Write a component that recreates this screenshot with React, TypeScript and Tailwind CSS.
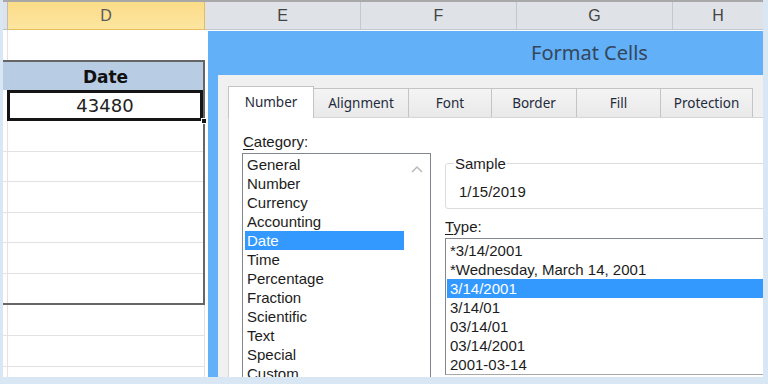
import React from "react";

const columns = [
  { name: "E", w: "w-[156px]" },
  { name: "F", w: "w-[156px]" },
  { name: "G", w: "w-[156px]" },
];

const categories = [
  "General",
  "Number",
  "Currency",
  "Accounting",
  "Date",
  "Time",
  "Percentage",
  "Fraction",
  "Scientific",
  "Text",
  "Special",
  "Custom",
];

const types = [
  "*3/14/2001",
  "*Wednesday, March 14, 2001",
  "3/14/2001",
  "3/14/01",
  "03/14/01",
  "03/14/2001",
  "2001-03-14",
];

const tabs = [
  { label: "Number", w: "w-[86px]" },
  { label: "Alignment", w: "w-[96px]" },
  { label: "Font", w: "w-[84px]" },
  { label: "Border", w: "w-[86px]" },
  { label: "Fill", w: "w-[85px]" },
  { label: "Protection", w: "w-[93px]" },
];

// plain sheet row: stub of column C + column D
const SheetRow = ({ h, last }: { h: string; last?: boolean }) => (
  <div className={`flex ${h} ${last ? "" : "border-b border-[#e2e2e2]"}`}>
    <div className="w-[5px] border-r border-[#e2e2e2]" />
    <div className="flex-1" />
  </div>
);

const FormatCells = () => (
  <div className="absolute left-[205px] top-[31px] w-[555px] h-[346px] overflow-hidden bg-[#62b0f8] flex flex-col">
    {/* Title bar */}
    <div className="h-[44px] shrink-0 flex items-center pl-[323px] text-[20px] text-[#34465a] font-['Noto_Sans',sans-serif]">
      Format Cells
    </div>

    <div className="flex-1 ml-[10px] bg-[#f0f0f0] pt-[11px] pl-[10px] flex flex-col">
      {/* Tabs */}
      <div className="flex items-end h-[31px] font-['Noto_Sans',sans-serif] text-[13.5px] text-[#1f2b3c]">
        {tabs.map((t, i) =>
          i === 0 ? (
            <div
              key={t.label}
              className={`${t.w} h-[32px] -mb-px relative z-10 bg-white border border-b-0 border-[#c4c4c4] flex items-center justify-center`}
            >
              {t.label}
            </div>
          ) : (
            <div
              key={t.label}
              className={`${t.w} h-[29px] -ml-px bg-gradient-to-b from-[#f4f4f4] to-[#e9e9e9] border border-b-0 border-[#c4c4c4] flex items-center justify-center`}
            >
              {t.label}
            </div>
          )
        )}
      </div>

      {/* Panel */}
      <div className="flex-1 bg-white border-t border-l border-[#d6d6d6] flex items-start pl-[13px] font-['Liberation_Sans',Arial,sans-serif] text-[15px] text-[#1c1c1c]">
        {/* Category column */}
        <div className="w-[189px] shrink-0 mt-[14px]">
          <div className="h-[19px] leading-[19px] pl-px">
            <span className="underline underline-offset-2">C</span>ategory:
          </div>
          <div className="mt-[2px] h-[240px] border border-[#828790] flex">
            <div className="flex-1 pt-[1px] pl-[2px]">
              {categories.map((c) => (
                <div
                  key={c}
                  className={`h-[19px] leading-[19px] pl-[2px] ${
                    c === "Date" ? "bg-[#3399ff] text-white" : ""
                  }`}
                >
                  {c}
                </div>
              ))}
            </div>
            <div className="w-[26px] flex justify-center pt-[11px]">
              <svg width="12" height="8" viewBox="0 0 12 8">
                <polyline
                  points="1,7 6,2 11,7"
                  fill="none"
                  stroke="#b9b9b9"
                  strokeWidth="1.5"
                />
              </svg>
            </div>
          </div>
        </div>

        {/* Sample + Type column */}
        <div className="ml-[14px] w-[400px] shrink-0 mt-[36px]">
          <fieldset className="h-[55px] border border-[#dcdcdc] rounded-[3px]">
            <legend className="ml-[8px] px-[1px] leading-[19px]">Sample</legend>
            <div className="pt-[9px] pl-[13px] leading-[19px]">1/15/2019</div>
          </fieldset>
          <div className="mt-[8px] h-[19px] leading-[19px]">
            <span className="underline underline-offset-2">T</span>ype:
          </div>
          <div className="mt-[2px] h-[137px] border border-[#828790] border-b-[#a8a8a8] pt-[2px] px-px">
            {types.map((t, i) => (
              <div
                key={t}
                className={`h-[19px] leading-[19px] pl-[3px] ${
                  i === 2 ? "bg-[#3399ff] text-white" : ""
                }`}
              >
                {t}
              </div>
            ))}
          </div>
        </div>
      </div>
    </div>
  </div>
);

export default function App() {
  return (
    <div className="w-[768px] h-[384px] bg-[#d9e6f4] overflow-hidden">
      <div className="relative ml-[3px] w-[760px] h-[377px] bg-white overflow-hidden">
        {/* Column headers */}
        <div className="flex h-[30px] border-t-2 border-[#a8a8a8] font-['Liberation_Sans',Arial,sans-serif] text-[16px]">
          <div className="w-[5px] bg-[#dfe3e8] border-r border-b border-[#b9bec6]" />
          <div className="w-[197px] bg-gradient-to-b from-[#fbdc88] to-[#fde6a0] border-r border-b border-[#e6bd5c] flex items-center justify-center text-[#5a5a5a]">
            D
          </div>
          {columns.map((c) => (
            <div
              key={c.name}
              className={`${c.w} bg-[#dfe3e8] border-r border-b border-[#c3c8cf] flex items-center justify-center text-[#444]`}
            >
              {c.name}
            </div>
          ))}
          <div className="flex-1 bg-[#dfe3e8] border-b border-[#c3c8cf] flex items-center justify-center text-[#444]">
            H
          </div>
        </div>

        {/* Sheet body: columns C (stub) and D */}
        <div className="w-[202px] font-['DejaVu_Sans',sans-serif]">
          <SheetRow h="h-[30px]" last />
          <div className="border-t-2 border-b-2 border-r-2 border-[#666]">
            <div className="h-[28px] bg-[#b8cce4] flex items-center justify-center pl-[5px] pt-[4px] font-bold text-[17px] text-[#111]">
              Date
            </div>
            <div className="relative flex h-[31px]">
              <div className="w-[4px]" />
              <div className="flex-1 border-[3px] border-[#151515] flex items-center justify-center text-[18px] text-[#222]">
                43480
              </div>
              <div className="absolute -right-[4px] -bottom-[3px] w-[6px] h-[6px] bg-[#151515] border border-white" />
            </div>
            <SheetRow h="h-[31px]" />
            <SheetRow h="h-[30px]" />
            <SheetRow h="h-[31px]" />
            <SheetRow h="h-[30px]" />
            <SheetRow h="h-[31px]" />
            <SheetRow h="h-[29px]" last />
          </div>
          <div className="border-r border-[#e2e2e2]">
            <SheetRow h="h-[31px]" />
            <SheetRow h="h-[31px]" />
            <SheetRow h="h-[12px]" last />
          </div>
        </div>

        <FormatCells />
      </div>
    </div>
  );
}
